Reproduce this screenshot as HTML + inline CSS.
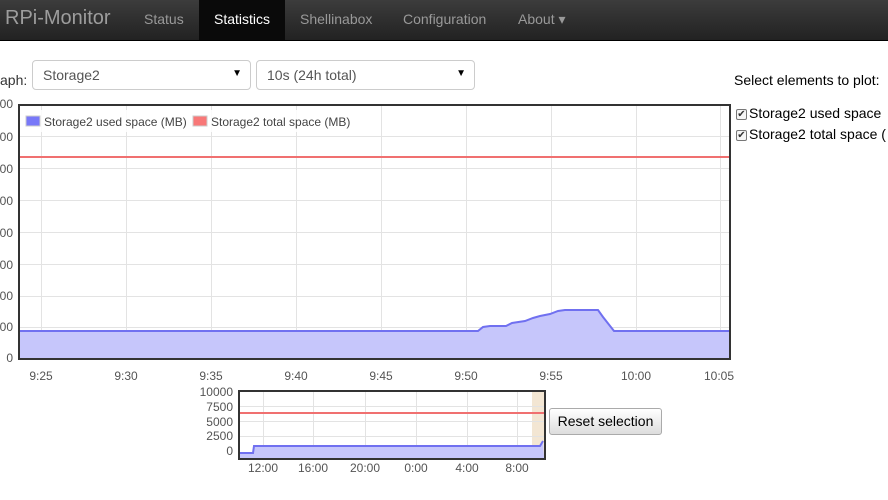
<!DOCTYPE html>
<html><head><style>
*{margin:0;padding:0;box-sizing:border-box}
body{width:888px;height:500px;overflow:hidden;background:#fff;font-family:"Liberation Sans",sans-serif;position:relative;color:#333}
.nav{position:absolute;left:0;top:0;width:888px;height:41px;background:linear-gradient(#3c3c3c,#222);border-bottom:1px solid #000}
.nav span{position:absolute;top:11px;font-size:14px;color:#999}
.brand{left:5px!important;top:7px!important;font-size:20px!important;color:#9d9d9d!important}
.act{position:absolute;left:199px;top:0;width:86px;height:40px;background:#0a0a0a}
.sel{position:absolute;top:60px;height:30px;border:1px solid #ccc;border-radius:4px;font-size:14px;padding:6px 10px;color:#555}
.sel b{position:absolute;right:8px;top:7px;font-size:10px;color:#000}
.t{position:absolute;font-size:14px;color:#000}
.cb{position:absolute;width:11px;height:11px;border:1px solid #777;border-radius:2px;font-size:10px;line-height:9px;text-align:center;background:#f5f5f5}
.btn{position:absolute;left:549px;top:408px;width:113px;height:27px;border:1px solid #aaa;border-radius:3px;background:linear-gradient(#fff,#ddd);font-size:14px;text-align:center;line-height:25px;color:#000}
</style></head><body>
<div class="nav"><div class="act"></div>
<span class="brand">RPi-Monitor</span>
<span style="left:144px">Status</span>
<span style="left:214px;color:#fff">Statistics</span>
<span style="left:300px">Shellinabox</span>
<span style="left:403px">Configuration</span>
<span style="left:518px">About ▾</span>
</div>
<div class="t" style="left:0;top:72px;color:#333">aph:</div>
<div class="sel" style="left:32px;width:219px">Storage2<b>▼</b></div>
<div class="sel" style="left:256px;width:219px">10s (24h total)<b>▼</b></div>
<div class="t" style="left:734px;top:72px">Select elements to plot:</div>
<div class="cb" style="left:736px;top:109px">✔</div><div class="t" style="left:749px;top:105px">Storage2 used space</div>
<div class="cb" style="left:736px;top:130px">✔</div><div class="t" style="left:749px;top:126px">Storage2 total space (</div>
<svg width="888" height="500" style="position:absolute;left:0;top:0" font-family="Liberation Sans" font-size="12" fill="#545454">
<g stroke="#e3e3e3" stroke-width="1">
<line x1="19" x2="729" y1="136.5" y2="136.5"/><line x1="19" x2="729" y1="168.5" y2="168.5"/><line x1="19" x2="729" y1="200.5" y2="200.5"/><line x1="19" x2="729" y1="232.5" y2="232.5"/><line x1="19" x2="729" y1="264.5" y2="264.5"/><line x1="19" x2="729" y1="296.5" y2="296.5"/><line x1="19" x2="729" y1="327.5" y2="327.5"/>
<line x1="41.5" x2="41.5" y1="105" y2="358"/><line x1="126.5" x2="126.5" y1="105" y2="358"/><line x1="211.5" x2="211.5" y1="105" y2="358"/><line x1="296.5" x2="296.5" y1="105" y2="358"/><line x1="381.5" x2="381.5" y1="105" y2="358"/><line x1="466.5" x2="466.5" y1="105" y2="358"/><line x1="551.5" x2="551.5" y1="105" y2="358"/><line x1="636.5" x2="636.5" y1="105" y2="358"/><line x1="720.5" x2="720.5" y1="105" y2="358"/>
</g>
<line x1="19" x2="729" y1="157" y2="157" stroke="#f07070" stroke-width="2"/>
<polygon points="20,331 478,331 483,327 490,326 506,326 512,323 525,321 533,318 540,316 550,314 558,311 565,310 598,310 603,317 614,331 729,331 729,358 20,358" fill="#c6c6fb"/>
<polyline points="20,331 478,331 483,327 490,326 506,326 512,323 525,321 533,318 540,316 550,314 558,311 565,310 598,310 603,317 614,331 729,331" fill="none" stroke="#7070f0" stroke-width="2"/>
<rect x="19" y="105" width="711" height="254" fill="none" stroke="#333" stroke-width="2"/>
<rect x="24" y="110" width="330" height="22" fill="#fff" opacity=".85"/>
<rect x="26" y="116" width="14" height="10" fill="#7878f8" stroke="#ccc"/><text x="44" y="126" fill="#444">Storage2 used space (MB)</text>
<rect x="193" y="116" width="14" height="10" fill="#f87878" stroke="#ccc"/><text x="211" y="126" fill="#444">Storage2 total space (MB)</text>
<g text-anchor="end"><text x="13" y="108">00</text><text x="13" y="141">00</text><text x="13" y="173">00</text><text x="13" y="205">00</text><text x="13" y="237">00</text><text x="13" y="269">00</text><text x="13" y="300">00</text><text x="13" y="331">00</text><text x="13" y="362">0</text></g>
<g text-anchor="middle"><text x="41" y="380">9:25</text><text x="126" y="380">9:30</text><text x="211" y="380">9:35</text><text x="296" y="380">9:40</text><text x="381" y="380">9:45</text><text x="466" y="380">9:50</text><text x="551" y="380">9:55</text><text x="636" y="380">10:00</text><text x="719" y="380">10:05</text></g>
<rect x="532" y="391" width="13" height="68" fill="#f3e6d3"/>
<g stroke="#e3e3e3"><line x1="239" x2="544" y1="406.5" y2="406.5"/><line x1="239" x2="544" y1="421.5" y2="421.5"/><line x1="239" x2="544" y1="436.5" y2="436.5"/>
<line x1="263.5" x2="263.5" y1="391" y2="458"/><line x1="313.5" x2="313.5" y1="391" y2="458"/><line x1="365.5" x2="365.5" y1="391" y2="458"/><line x1="416.5" x2="416.5" y1="391" y2="458"/><line x1="467.5" x2="467.5" y1="391" y2="458"/><line x1="517.5" x2="517.5" y1="391" y2="458"/></g>
<line x1="239" x2="544" y1="413" y2="413" stroke="#f07070" stroke-width="2"/>
<polygon points="239,453 253,453 254,446 540,446 543,441 544,458 239,458" fill="#c6c6fb"/>
<polyline points="239,453 253,453 254,446 540,446 543,441" fill="none" stroke="#7070f0" stroke-width="2"/>
<rect x="239" y="391" width="306" height="68" fill="none" stroke="#333" stroke-width="2"/>
<g text-anchor="end"><text x="233" y="396">10000</text><text x="233" y="411">7500</text><text x="233" y="426">5000</text><text x="233" y="440">2500</text><text x="233" y="455">0</text></g>
<g text-anchor="middle"><text x="263" y="472">12:00</text><text x="313" y="472">16:00</text><text x="365" y="472">20:00</text><text x="416" y="472">0:00</text><text x="467" y="472">4:00</text><text x="517" y="472">8:00</text></g>
</svg>
<div class="btn">Reset selection</div>
</body></html>
